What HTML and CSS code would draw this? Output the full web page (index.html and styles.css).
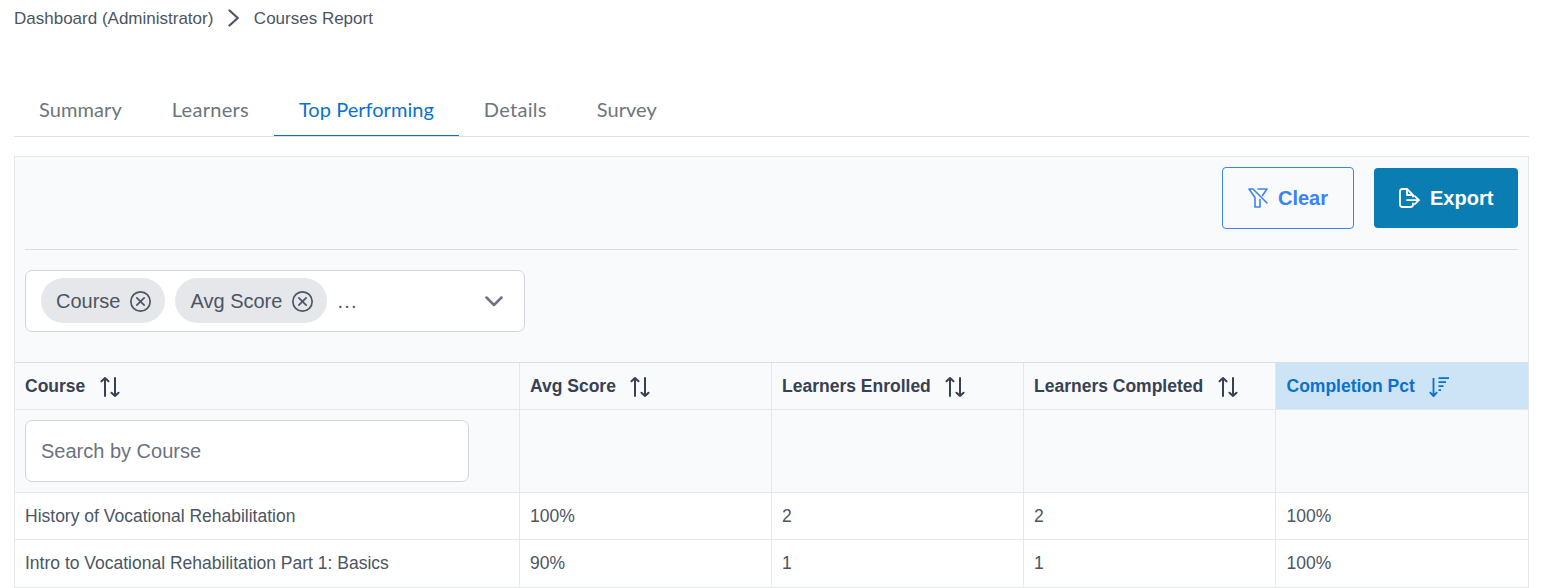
FILE: index.html
```html
<!DOCTYPE html>
<html lang="en">
<head>
<meta charset="utf-8">
<title>Courses Report</title>
<link rel="stylesheet" href="styles.css">
</head>
<body>
<svg class="sprite" width="0" height="0">
  <symbol id="sort" viewBox="0 0 20 20"><path d="M5 19V1M1.500 4.300 5 1l3.500 3.300M15 1v18M11.500 15.700 15 19l3.500-3.300"/></symbol>
  <symbol id="close" viewBox="0 0 20 20"><circle cx="10" cy="10" r="9.200"/><path d="m6.500 6.500 7 7m0-7-7 7"/></symbol>
</svg>
<nav class="breadcrumb">
  <a class="crumb">Dashboard (Administrator)</a>
  <svg class="crumb-sep" viewBox="0 0 12 18"><path d="M1.500 1.500 9.800 9l-8.300 7.500"/></svg>
  <a class="crumb">Courses Report</a>
</nav>
<div class="tabs">
  <a class="tab tab-narrow">Summary</a>
  <a class="tab tab-wide">Learners</a>
  <a class="tab tab-active">Top Performing</a>
  <a class="tab tab-wide">Details</a>
  <a class="tab tab-narrow">Survey</a>
</div>
<main class="panel">
  <header class="toolbar">
    <div class="actions">
      <button class="btn btn-clear"><svg class="icon" viewBox="0 0 20 20"><path d="M5 1H1l6 8.500V19h5v-7.500M5 1l14 14M10 1h9l-4.500 6.500"/></svg>Clear</button>
      <button class="btn btn-export"><svg class="icon icon-export" viewBox="0 0 21 20"><path d="M14 15.500V16.500Q14 19 11.500 19H3.500Q1 19 1 16.500V3.500Q1 1 3.500 1H8l6 6v1.500M8 1v6h6M8 12.200h12M15.800 8.200l4.200 4-4.200 4"/></svg>Export</button>
    </div>
    <div class="select">
      <span class="chip">Course<svg class="chip-x"><use href="#close"/></svg></span>
      <span class="chip">Avg Score<svg class="chip-x"><use href="#close"/></svg></span>
      <span class="more">...</span>
      <svg class="chevron" viewBox="0 0 18 11"><path d="m1.500 1.500 7.500 7.500 7.500-7.500"/></svg>
    </div>
  </header>
  <div class="row head">
    <div class="cell">Course<svg class="sort"><use href="#sort"/></svg></div>
    <div class="cell">Avg Score<svg class="sort"><use href="#sort"/></svg></div>
    <div class="cell">Learners Enrolled<svg class="sort"><use href="#sort"/></svg></div>
    <div class="cell">Learners Completed<svg class="sort"><use href="#sort"/></svg></div>
    <div class="cell sorted">Completion Pct<svg class="sort" viewBox="0 0 20 20"><path d="M4.500 1v18M.8 15.200l3.700 3.800 3.700-3.800M9.500 1.200H20M9.500 5.200h7.500M9.500 9.200h5M9.500 13.200h2.500"/></svg></div>
  </div>
  <div class="row filters">
    <div class="cell"><input class="search" type="text" placeholder="Search by Course"></div>
    <div class="cell"></div>
    <div class="cell"></div>
    <div class="cell"></div>
    <div class="cell"></div>
  </div>
  <div class="row">
    <div class="cell">History of Vocational Rehabilitation</div>
    <div class="cell">100%</div>
    <div class="cell">2</div>
    <div class="cell">2</div>
    <div class="cell">100%</div>
  </div>
  <div class="row">
    <div class="cell">Intro to Vocational Rehabilitation Part 1: Basics</div>
    <div class="cell">90%</div>
    <div class="cell">1</div>
    <div class="cell">1</div>
    <div class="cell">100%</div>
  </div>
</main>
</body>
</html>
```
FILE: styles.css
```css
* { box-sizing: border-box; }
body {
  margin: 0;
  padding: 0 18px 0 14px;
  height: 588px;
  overflow: hidden;
  background: #fff;
  color: #4b5563;
  font-family: "Liberation Sans", Arial, sans-serif;
  font-size: 17.5px;
}
svg { fill: none; stroke: currentColor; stroke-width: 1.6; flex: none; stroke-linecap: round; stroke-linejoin: round; }
.sprite { position: absolute; }
.breadcrumb { display: flex; align-items: center; height: 36px; padding-top: 1px; font-size: 17px; }
.crumb-sep { width: 12px; height: 18px; margin: -1px 14px 0 14.5px; stroke-width: 2.2; }
.tabs {
  display: flex;
  height: 52px;
  margin-top: 49px;
  border-bottom: 1px solid #dee2e6;
  font-family: Lato, sans-serif;
  font-size: 20px;
  color: #6c757d;
}
.tab { height: 51px; line-height: 48px; padding: 0 25px; }
.tab-narrow { letter-spacing: .08px; }
.tab-wide { letter-spacing: .28px; }
.tab-active { letter-spacing: .03px; color: #0972ce; border-bottom: 1px solid #0972ce; }
.panel { margin-top: 19px; border: solid #e5e7eb; border-width: 1px 1px 0; }
.toolbar { height: 205px; padding: 10px; background: #f9fafc; }
.actions {
  display: flex;
  justify-content: flex-end;
  align-items: center;
  gap: 20px;
  height: 83px;
  padding-bottom: 20px;
  border-bottom: 1px solid #dcdee2;
}
.btn {
  display: flex;
  align-items: center;
  height: 60px;
  padding: 0 25px;
  border: 0;
  border-radius: 4px;
  font: bold 20px "Liberation Sans", Arial, sans-serif;
  gap: 10px;
}
.icon { width: 20px; height: 20px; }
.icon-export { width: 21px; stroke-width: 1.8; }
.btn-clear { width: 132px; height: 62px; border: 1px solid #3b82f6; color: #3b82f6; background: transparent; }
.btn-export { width: 144px; padding: 0 24px 0 25px; background: #0a7db3; color: #fff; }
.select {
  display: flex;
  align-items: center;
  width: 500px;
  height: 62px;
  margin-top: 20px;
  padding: 0 21px 0 15px;
  border: 1px solid #d1d5db;
  border-radius: 7px;
  background: #fff;
  font-size: 20px;
}
.chip {
  display: flex;
  align-items: center;
  height: 45px;
  margin: 0 10px 1px 0;
  padding: 1px 14px 0 15px;
  border-radius: 23px;
  background: #e5e7eb;
}
.chip-x { width: 21px; height: 21px; margin-left: 10px; }
.more { letter-spacing: 1.2px; }
.chevron { width: 18px; height: 11px; margin-left: auto; color: #6b7280; stroke-width: 2.5; }
.row {
  display: grid;
  grid-template-columns: 504px 252px 252px 252px 253px;
  height: 47px;
  border-top: 1px solid #e5e7eb;
}
.row:last-child { height: 49px; border-bottom: 1px solid #e5e7eb; }
.row:last-child .cell { padding-bottom: 1px; }
.cell { display: flex; align-items: center; padding: 0 10px; }
.cell + .cell { border-left: 1px solid #e5e7eb; }
.cell:last-child { padding-left: 10.5px; }
.head { border-top-color: #dcdee2; background: #f9fafc; color: #374151; font-weight: bold; }
.sort { width: 20px; height: 20px; margin: 2px 0 0 14.5px; stroke-width: 2; }
.sorted { background: #cde3f6; color: #0972ce; }
.sorted .sort { stroke-width: 1.8; stroke-linecap: butt; }
.filters { height: 83px; background: #f9fafc; }
.search {
  width: 444px;
  height: 62px;
  padding: 0 15px;
  border: 1px solid #d1d5db;
  border-radius: 7px;
  background: #fff;
  font: 20px "Liberation Sans", Arial, sans-serif;
}
.search::placeholder { color: #6b7280; opacity: 1; }
```
